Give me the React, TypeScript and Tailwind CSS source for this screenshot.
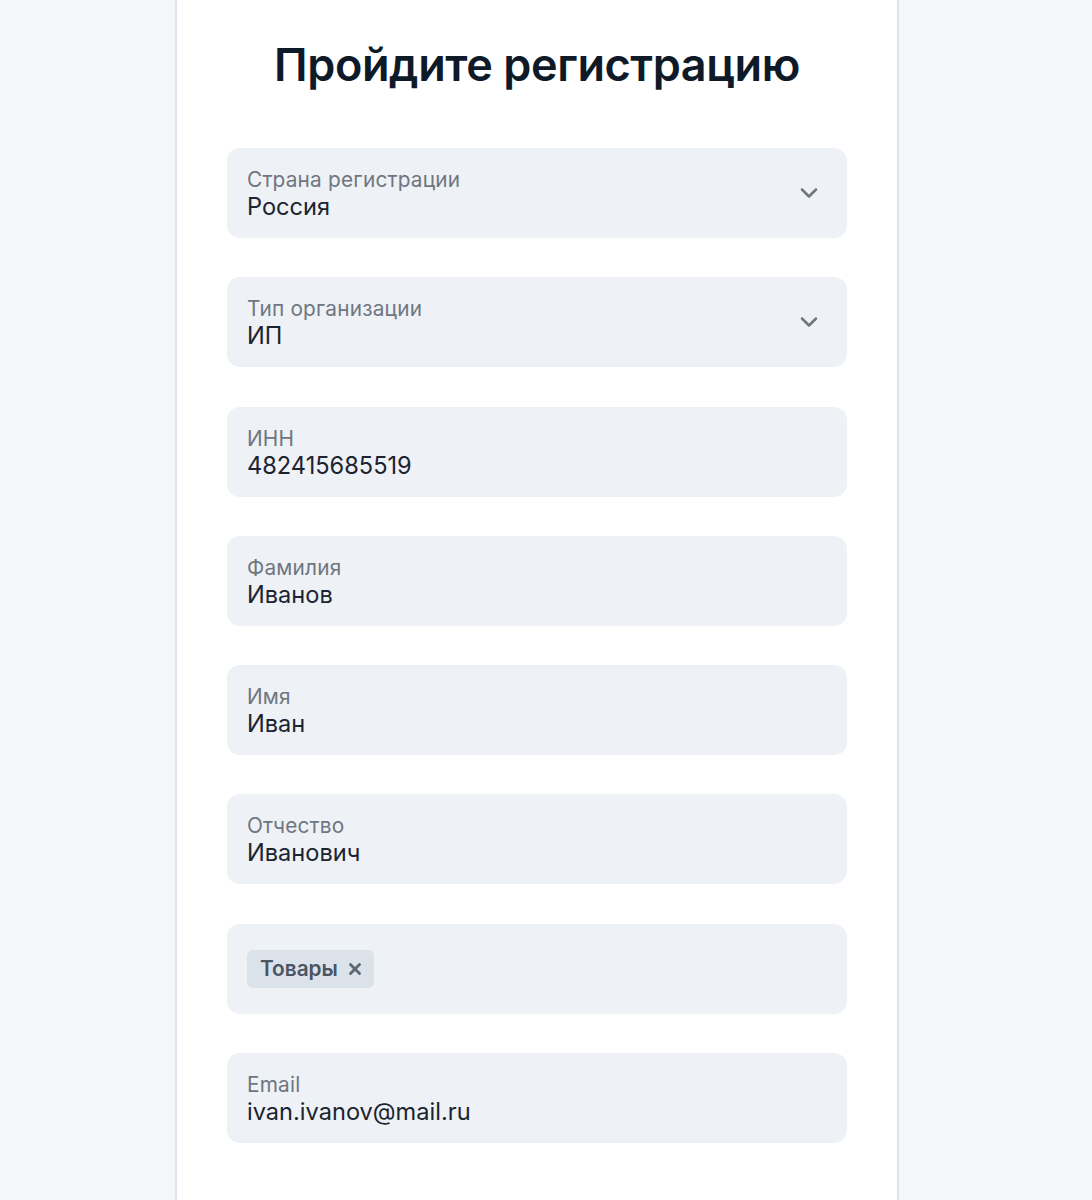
import { ChevronDown, X } from "lucide-react";

type Field = { label?: string; value?: string; select?: boolean; chips?: string[] };

const fields: Field[] = [
  { label: "Страна регистрации", value: "Россия", select: true },
  { label: "Тип организации", value: "ИП", select: true },
  { label: "ИНН", value: "482415685519" },
  { label: "Фамилия", value: "Иванов" },
  { label: "Имя", value: "Иван" },
  { label: "Отчество", value: "Иванович" },
  { chips: ["Товары"] },
  { label: "Email", value: "ivan.ivanov@mail.ru" },
];

function FormField({ field }: { field: Field }) {
  return (
    <div className="flex h-[90px] items-center rounded-[13px] bg-[#eef1f6] pl-[20px] pr-[24px]">
      {field.chips ? (
        <div className="flex gap-2">
          {field.chips.map(chip => (
            <span
              key={chip}
              className="flex h-[38px] items-center gap-[8px] rounded-[6px] bg-[#dce2ea] pl-[13px] pr-[10px] text-[20.8px] font-semibold text-[#4a5562]"
            >
              {chip}
              <X className="h-[18px] w-[18px] text-[#5d6672]" strokeWidth={3.8} />
            </span>
          ))}
        </div>
      ) : (
        <div className="flex flex-1 flex-col pt-[4px]">
          <span className="text-[20.8px] leading-[24px] tracking-[0.2px] text-[#6f7680]">{field.label}</span>
          <span className="text-[23.6px] leading-[30px] text-[#1b2430]">{field.value}</span>
        </div>
      )}
      {field.select && <ChevronDown className="h-[28px] w-[28px] text-[#707780]" strokeWidth={2.2} />}
    </div>
  );
}

export default function App() {
  return (
    <div className="min-h-[1200px] bg-[#f4f6fa] font-['Inter','Noto_Sans',sans-serif]">
      <div className="ml-[175px] min-h-[1200px] w-[724px] border-x-2 border-[#dfe3eb] bg-white px-[50px] pt-[37px]">
        <h1 className="text-center text-[45px] font-semibold leading-[56px] tracking-[-0.4px] text-[#0f1a28]">
          Пройдите регистрацию
        </h1>
        <div className="mt-[55px] flex flex-col gap-[39.3px]">
          {fields.map((f, i) => (
            <FormField key={i} field={f} />
          ))}
        </div>
      </div>
    </div>
  );
}
